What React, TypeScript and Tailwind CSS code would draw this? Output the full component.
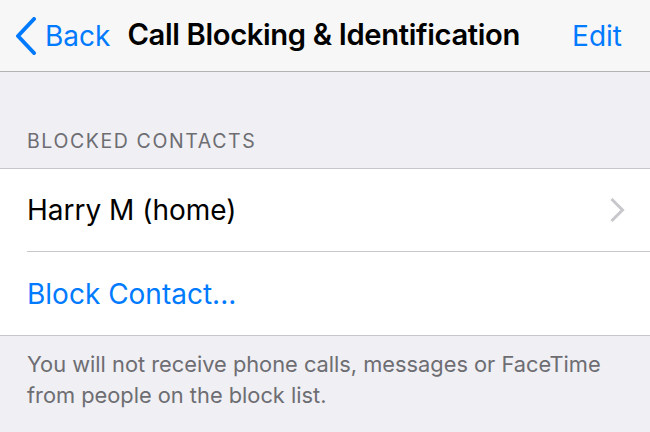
const font = { fontFamily: "Inter, 'Noto Sans', sans-serif" };

function BackChevron() {
  return (
    <svg width="22" height="38" viewBox="0 0 22 38" fill="none">
      <path
        d="M19 2 L3 19 L19 36"
        stroke="#007aff"
        strokeWidth="4"
        strokeLinecap="round"
        strokeLinejoin="round"
      />
    </svg>
  );
}

function Disclosure() {
  return (
    <svg width="16" height="26" viewBox="0 0 16 26" fill="none">
      <path
        d="M2.5 2 L13.5 13 L2.5 24"
        stroke="#c7c7cc"
        strokeWidth="3"
        strokeLinecap="butt"
        strokeLinejoin="miter"
      />
    </svg>
  );
}

export default function App() {
  return (
    <div
      className="flex h-[432px] w-[650px] flex-col overflow-hidden bg-[#efeff4]"
      style={font}
    >
      {/* nav bar */}
      <div className="flex h-[72px] shrink-0 items-center border-b border-[#b2b2b2] bg-[#f7f7f7] pl-[15px] pr-[28px]">
        <div className="flex items-center gap-[8px] text-[28px] text-[#007aff]">
          <BackChevron />
          <span>Back</span>
        </div>
        <div className="ml-[17px] flex-1 pb-[1px] text-[29.2px] font-semibold tracking-[-0.35px] text-black">
          Call Blocking &amp; Identification
        </div>
        <span className="text-[28px] text-[#007aff]">Edit</span>
      </div>

      {/* section header */}
      <div className="flex h-[96px] shrink-0 items-end px-[27px] pb-[12px] text-[19.5px] tracking-[1.6px] text-[#6d6d72]">
        BLOCKED CONTACTS
      </div>

      {/* list */}
      <div className="border-y border-[#c8c7cc] bg-white">
        <div className="ml-[27px] flex h-[83px] items-center justify-between border-b border-[#c8c7cc] pr-[25px]">
          <span className="text-[28px] text-black">Harry M (home)</span>
          <Disclosure />
        </div>
        <div className="flex h-[83px] items-center pl-[27px]">
          <span className="text-[28px] text-[#007aff]">Block Contact...</span>
        </div>
      </div>

      {/* footer */}
      <p className="px-[27px] pt-[13px] text-[21.8px] leading-[31px] text-[#6d6d72]">
        You will not receive phone calls, messages or FaceTime from people on
        the block list.
      </p>
    </div>
  );
}
